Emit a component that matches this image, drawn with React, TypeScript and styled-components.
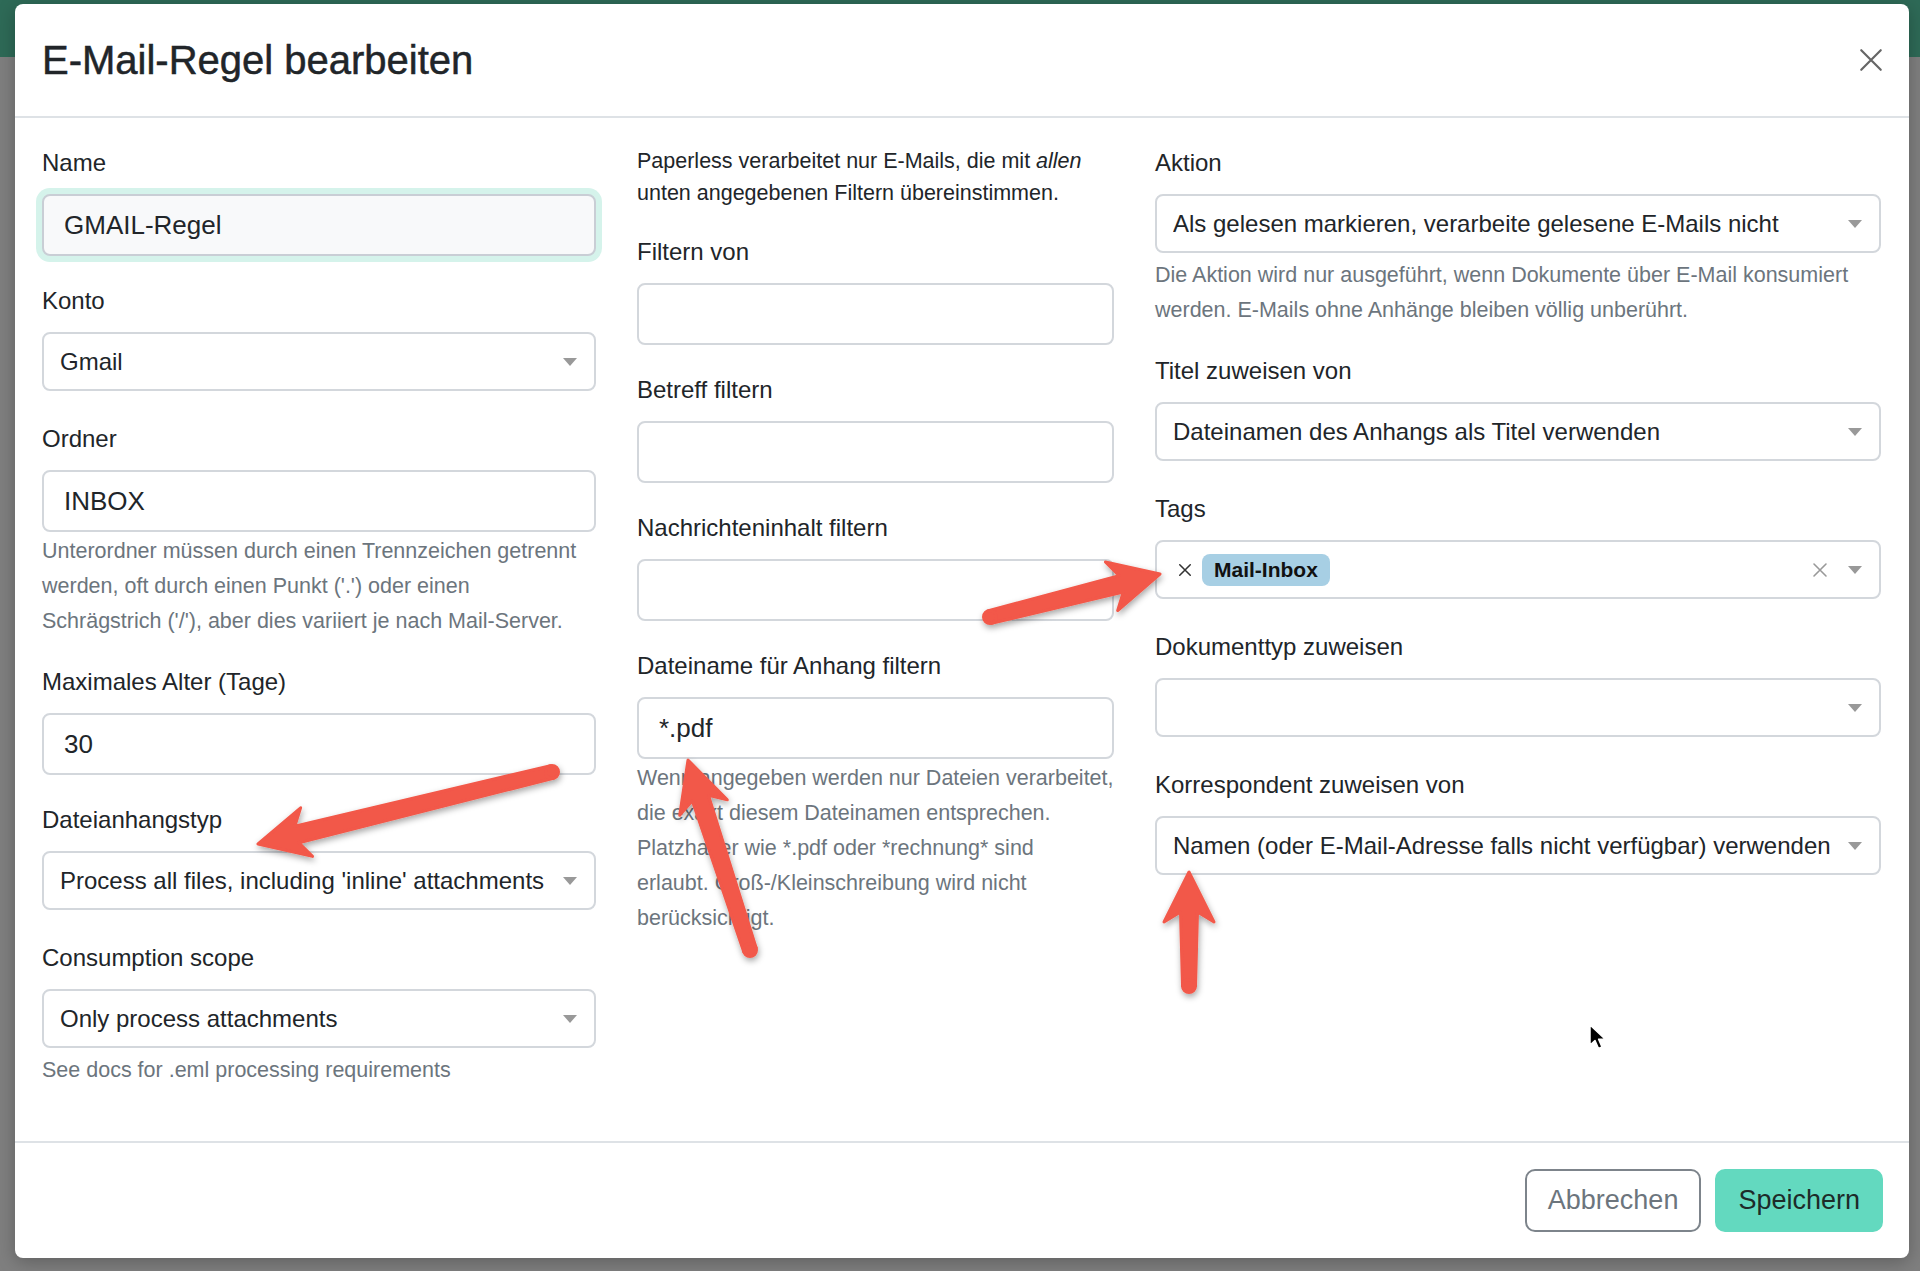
import React from 'react';
import styled, { createGlobalStyle } from 'styled-components';

const GlobalStyle = createGlobalStyle`
  html, body {
    margin: 0;
    padding: 0;
  }
  body {
    font-family: "Liberation Sans", Arial, sans-serif;
    color: #212529;
  }
  * {
    box-sizing: border-box;
  }
`;

const Page = styled.div`
  position: relative;
  width: 1920px;
  height: 1271px;
  overflow: hidden;
  padding: 4px 0 0 15px;
  background: linear-gradient(to bottom, #2e6a57 0, #2e6a57 57px, #7f7f7f 57px);
`;

const Modal = styled.div`
  width: 1894px;
  height: 1254px;
  display: flex;
  flex-direction: column;
  background: #fff;
  border-radius: 8px;
  box-shadow: 0 4px 18px rgba(0, 0, 0, 0.25);
  overflow: hidden;
`;

const Header = styled.div`
  height: 114px;
  flex: none;
  display: flex;
  align-items: center;
  justify-content: space-between;
  padding: 0 25px 0 27px;
  border-bottom: 2px solid #dee2e6;
`;

const Title = styled.h1`
  margin: 0;
  font-size: 40px;
  font-weight: 500;
  line-height: 48px;
  color: #212529;
  -webkit-text-stroke: 0.5px #212529;
`;

const CloseButton = styled.button`
  display: flex;
  padding: 0;
  border: none;
  background: transparent;
  cursor: pointer;
`;

const Body = styled.div`
  flex: 1;
  display: grid;
  grid-template-columns: 554px 477px 726px;
  column-gap: 41px;
  align-items: start;
  padding: 27px 27px 0;
`;

const Column = styled.div`
  display: flex;
  flex-direction: column;
`;

const Field = styled.div`
  display: flex;
  flex-direction: column;
  margin-bottom: 27px;
`;

const Label = styled.label`
  display: block;
  font-size: 24px;
  line-height: 36px;
  margin-bottom: 13px;
  color: #212529;
`;

const TextInput = styled.input<{ focused?: boolean }>`
  display: block;
  width: 100%;
  height: 62px;
  padding: 0 20px;
  font-family: inherit;
  font-size: 26px;
  color: #212529;
  background: ${p => (p.focused ? '#f8f9fa' : '#fff')};
  border: 2px solid ${p => (p.focused ? '#c9ced5' : '#d3d7dc')};
  border-radius: 8px;
  outline: none;
  box-shadow: ${p => (p.focused ? '0 0 0 6px #d5f3eb' : 'none')};
`;

const SelectBox = styled.div<{ tags?: boolean }>`
  display: flex;
  align-items: center;
  gap: ${p => (p.tags ? '20px' : '8px')};
  height: 59px;
  margin-bottom: 3px;
  padding: 0 17px 0 ${p => (p.tags ? '21px' : '16px')};
  font-size: 24px;
  color: #212529;
  background: #fff;
  border: 2px solid #d3d7dc;
  border-radius: 8px;
`;

const SelectValue = styled.span`
  flex: 1;
  display: flex;
  align-items: center;
  gap: 10px;
  min-width: 0;
  white-space: nowrap;
  overflow: hidden;
`;

const Caret = styled.span`
  flex: none;
  width: 0;
  height: 0;
  border-left: 7px solid transparent;
  border-right: 7px solid transparent;
  border-top: 8px solid #999;
`;

const Help = styled.div`
  margin: 2px 0 -2px;
  font-size: 21.5px;
  line-height: 35px;
  color: #6c757d;
`;

const Intro = styled.p`
  margin: 0 0 25px;
  font-size: 21.5px;
  line-height: 32px;
  color: #212529;
`;

const TagChip = styled.span`
  display: inline-flex;
  align-items: center;
  height: 32px;
  padding: 0 12px;
  font-size: 21px;
  font-weight: 700;
  color: #111;
  background: #a7cfe4;
  border-radius: 8px;
`;

const Footer = styled.div`
  flex: none;
  height: 117px;
  display: flex;
  justify-content: flex-end;
  align-items: flex-start;
  gap: 14px;
  padding: 26px 26px 0;
  border-top: 2px solid #dee2e6;
`;

const Button = styled.button<{ primary?: boolean }>`
  height: 63px;
  padding: 0 21px;
  font-family: inherit;
  font-size: 27px;
  border-radius: 10px;
  cursor: pointer;
  color: ${p => (p.primary ? '#1d2b29' : '#6c757d')};
  background: ${p => (p.primary ? '#63d9bf' : '#fff')};
  border: 2px solid ${p => (p.primary ? '#63d9bf' : '#7d848b')};
`;

const Overlay = styled.svg`
  position: absolute;
  top: 0;
  left: 0;
  pointer-events: none;
`;

const Cross = ({ size, color, width }: { size: number; color: string; width: number }) => (
  <svg width={size} height={size} viewBox="0 0 24 24">
    <path d="M3 3 L21 21 M21 3 L3 21" stroke={color} strokeWidth={width} strokeLinecap="round" />
  </svg>
);

type Pt = [number, number];

function arrowPoints(tail: Pt, tip: Pt, hl: number, hw: number, ws: number, wt: number) {
  const dx = tail[0] - tip[0];
  const dy = tail[1] - tip[1];
  const len = Math.hypot(dx, dy);
  const ux = dx / len;
  const uy = dy / len;
  const nx = -uy;
  const ny = ux;
  const p = (u: number, v: number) => `${(tip[0] + ux * u + nx * v).toFixed(1)},${(tip[1] + uy * u + ny * v).toFixed(1)}`;
  return [p(0, 0), p(hl, hw), p(hl * 0.8, ws / 2), p(len, wt / 2), p(len, -wt / 2), p(hl * 0.8, -ws / 2), p(hl, -hw)].join(' ');
}

const arrows: { tail: Pt; tip: Pt }[] = [
  { tail: [552, 772], tip: [258, 844] },
  { tail: [990, 617], tip: [1160, 574] },
  { tail: [750, 950], tip: [688, 760] },
  { tail: [1189, 986], tip: [1189, 872] },
];

const Select = ({ value }: { value?: string }) => (
  <SelectBox>
    <SelectValue>{value}</SelectValue>
    <Caret />
  </SelectBox>
);

const App: React.FC = () => {
  return (
    <>
      <GlobalStyle />
      <Page>
        <Modal>
          <Header>
            <Title>E-Mail-Regel bearbeiten</Title>
            <CloseButton type="button" aria-label="Schließen">
              <Cross size={26} color="#666" width={2} />
            </CloseButton>
          </Header>

          <Body>
            <Column>
              <Field>
                <Label>Name</Label>
                <TextInput focused readOnly value="GMAIL-Regel" />
              </Field>
              <Field>
                <Label>Konto</Label>
                <Select value="Gmail" />
              </Field>
              <Field>
                <Label>Ordner</Label>
                <TextInput readOnly value="INBOX" />
                <Help>
                  Unterordner müssen durch einen Trennzeichen getrennt
                  <br />
                  werden, oft durch einen Punkt ('.') oder einen
                  <br />
                  Schrägstrich ('/'), aber dies variiert je nach Mail-Server.
                </Help>
              </Field>
              <Field>
                <Label>Maximales Alter (Tage)</Label>
                <TextInput readOnly value="30" />
              </Field>
              <Field>
                <Label>Dateianhangstyp</Label>
                <Select value="Process all files, including 'inline' attachments" />
              </Field>
              <Field>
                <Label>Consumption scope</Label>
                <Select value="Only process attachments" />
                <Help>See docs for .eml processing requirements</Help>
              </Field>
            </Column>

            <Column>
              <Intro>
                Paperless verarbeitet nur E-Mails, die mit <em>allen</em>
                <br />
                unten angegebenen Filtern übereinstimmen.
              </Intro>
              <Field>
                <Label>Filtern von</Label>
                <TextInput readOnly value="" />
              </Field>
              <Field>
                <Label>Betreff filtern</Label>
                <TextInput readOnly value="" />
              </Field>
              <Field>
                <Label>Nachrichteninhalt filtern</Label>
                <TextInput readOnly value="" />
              </Field>
              <Field>
                <Label>Dateiname für Anhang filtern</Label>
                <TextInput readOnly value="*.pdf" />
                <Help>
                  Wenn angegeben werden nur Dateien verarbeitet,
                  <br />
                  die exakt diesem Dateinamen entsprechen.
                  <br />
                  Platzhalter wie *.pdf oder *rechnung* sind
                  <br />
                  erlaubt. Groß-/Kleinschreibung wird nicht
                  <br />
                  berücksichtigt.
                </Help>
              </Field>
            </Column>

            <Column>
              <Field>
                <Label>Aktion</Label>
                <Select value="Als gelesen markieren, verarbeite gelesene E-Mails nicht" />
                <Help>
                  Die Aktion wird nur ausgeführt, wenn Dokumente über E-Mail konsumiert
                  <br />
                  werden. E-Mails ohne Anhänge bleiben völlig unberührt.
                </Help>
              </Field>
              <Field>
                <Label>Titel zuweisen von</Label>
                <Select value="Dateinamen des Anhangs als Titel verwenden" />
              </Field>
              <Field>
                <Label>Tags</Label>
                <SelectBox tags>
                  <SelectValue>
                    <Cross size={14} color="#333" width={2.6} />
                    <TagChip>Mail-Inbox</TagChip>
                  </SelectValue>
                  <Cross size={16} color="#999" width={2.4} />
                  <Caret />
                </SelectBox>
              </Field>
              <Field>
                <Label>Dokumenttyp zuweisen</Label>
                <Select />
              </Field>
              <Field>
                <Label>Korrespondent zuweisen von</Label>
                <Select value="Namen (oder E-Mail-Adresse falls nicht verfügbar) verwenden" />
              </Field>
            </Column>
          </Body>

          <Footer>
            <Button type="button">Abbrechen</Button>
            <Button type="button" primary>
              Speichern
            </Button>
          </Footer>
        </Modal>

        <Overlay width={1920} height={1271} viewBox="0 0 1920 1271">
          <defs>
            <filter id="arrowShadow" x="-20%" y="-20%" width="140%" height="140%">
              <feDropShadow dx="1" dy="3" stdDeviation="3" floodColor="#000" floodOpacity="0.35" />
            </filter>
          </defs>
          <g fill="#f25849" stroke="#f25849" strokeWidth={3} strokeLinejoin="round" filter="url(#arrowShadow)">
            {arrows.map((a, i) => (
              <g key={i}>
                <polygon points={arrowPoints(a.tail, a.tip, 50, 25, 17, 13)} />
                <circle cx={a.tail[0]} cy={a.tail[1]} r={6.5} />
              </g>
            ))}
          </g>
          <path
            d="M1590 1025 L1590 1045 L1595 1040.5 L1598.5 1048.5 L1602 1047 L1598.6 1039.2 L1605 1039 Z"
            fill="#000"
            stroke="#fff"
            strokeWidth={1.5}
            strokeLinejoin="round"
          />
        </Overlay>
      </Page>
    </>
  );
};

export default App;
